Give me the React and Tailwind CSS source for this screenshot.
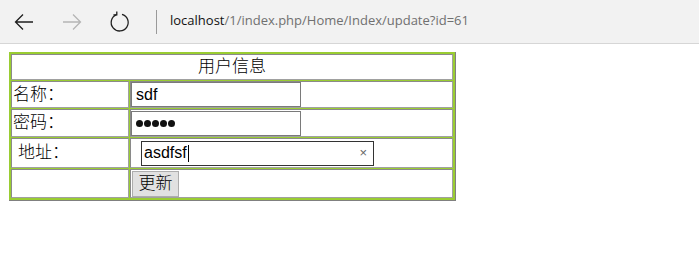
import React from 'react';

const cjk = { fontFamily: '"Liberation Sans", "Noto Sans CJK SC", sans-serif' };

function ChromeBar() {
  return (
    <div className="flex h-[44px] items-center border-b border-[#d6d6d6] bg-[#f2f2f2]">
      <div className="flex w-[48px] justify-center">
        <svg width="22" height="22" viewBox="0 0 22 22" fill="none" stroke="#1f1f1f" strokeWidth="1.3">
          <path d="M20 11H2.5M10 3.5L2.5 11l7.5 7.5" />
        </svg>
      </div>
      <div className="flex w-[48px] justify-center">
        <svg width="22" height="22" viewBox="0 0 22 22" fill="none" stroke="#b5b5b5" strokeWidth="1.3">
          <path d="M2 11h17.5M12 3.5l7.5 7.5-7.5 7.5" />
        </svg>
      </div>
      <div className="flex w-[48px] justify-center">
        <svg width="22" height="22" viewBox="0 0 22 22" fill="none" stroke="#1f1f1f" strokeWidth="1.3">
          <path d="M7.5 3.6A8.5 8.5 0 1 0 13 3.3" />
          <path d="M7.8 0.5v3.4H4.4" />
        </svg>
      </div>
      <div className="ml-[12px] h-[24px] w-px bg-[#9a9a9a]" />
      <div className="ml-[13px] pb-[1px] text-[13px] text-[#707070]" style={{ fontFamily: '"Open Sans", sans-serif' }}>
        <span className="text-[#111]">localhost</span>/1/index.php/Home/Index/update?id=61
      </div>
    </div>
  );
}

function Cell({ className = '', children }) {
  return (
    <div className={`flex items-center border border-[#a0a0a0] border-t-[#8a8a8a] border-l-[#8a8a8a] bg-white ${className}`}>
      {children}
    </div>
  );
}

export default function App() {
  return (
    <div className="h-[255px] w-[699px] bg-white">
      <ChromeBar />
      <div className="pl-[9px] pt-[8px]">
        <div
          className="grid w-[447px] grid-cols-[118px_323px] gap-[1px] border-r border-b border-[#808080] bg-[#9acd32] p-[2px] text-[17px] text-black"
          style={cjk}
        >
          <Cell className="col-span-2 h-[26px] justify-center font-light">用户信息</Cell>

          <Cell className="h-[27px] pl-[1px] font-light">名称：</Cell>
          <Cell className="h-[27px]">
            <div className="flex h-[25px] w-[170px] items-center border border-[#7a7a7a] px-[4px] text-[16px] font-normal">sdf</div>
          </Cell>

          <Cell className="h-[28px] pl-[1px] font-light">密码：</Cell>
          <Cell className="h-[28px]">
            <div className="flex h-[25px] w-[170px] items-center gap-[1px] border border-[#7a7a7a] px-[4px]">
              {[0, 1, 2, 3, 4].map((i) => (
                <span key={i} className="h-[7px] w-[7px] rounded-full bg-[#111]" />
              ))}
            </div>
          </Cell>

          <Cell className="h-[30px] pl-[6px] font-light">地址：</Cell>
          <Cell className="h-[30px] pl-[10px]">
            <div className="flex h-[25px] w-[233px] items-center border border-[#333] pl-[2px] pr-[6px] text-[16px]">
              <span>asdfsf</span>
              <span className="ml-[1px] h-[17px] w-px bg-black" />
              <span className="ml-auto text-[13px] text-[#666]">×</span>
            </div>
          </Cell>

          <Cell className="h-[29px]" />
          <Cell className="h-[29px] pl-[1px]">
            <div className="flex h-[26px] w-[47px] items-center justify-center border border-[#adadad] bg-[#e1e1e1] text-[17px] font-light">
              更新
            </div>
          </Cell>
        </div>
      </div>
    </div>
  );
}
